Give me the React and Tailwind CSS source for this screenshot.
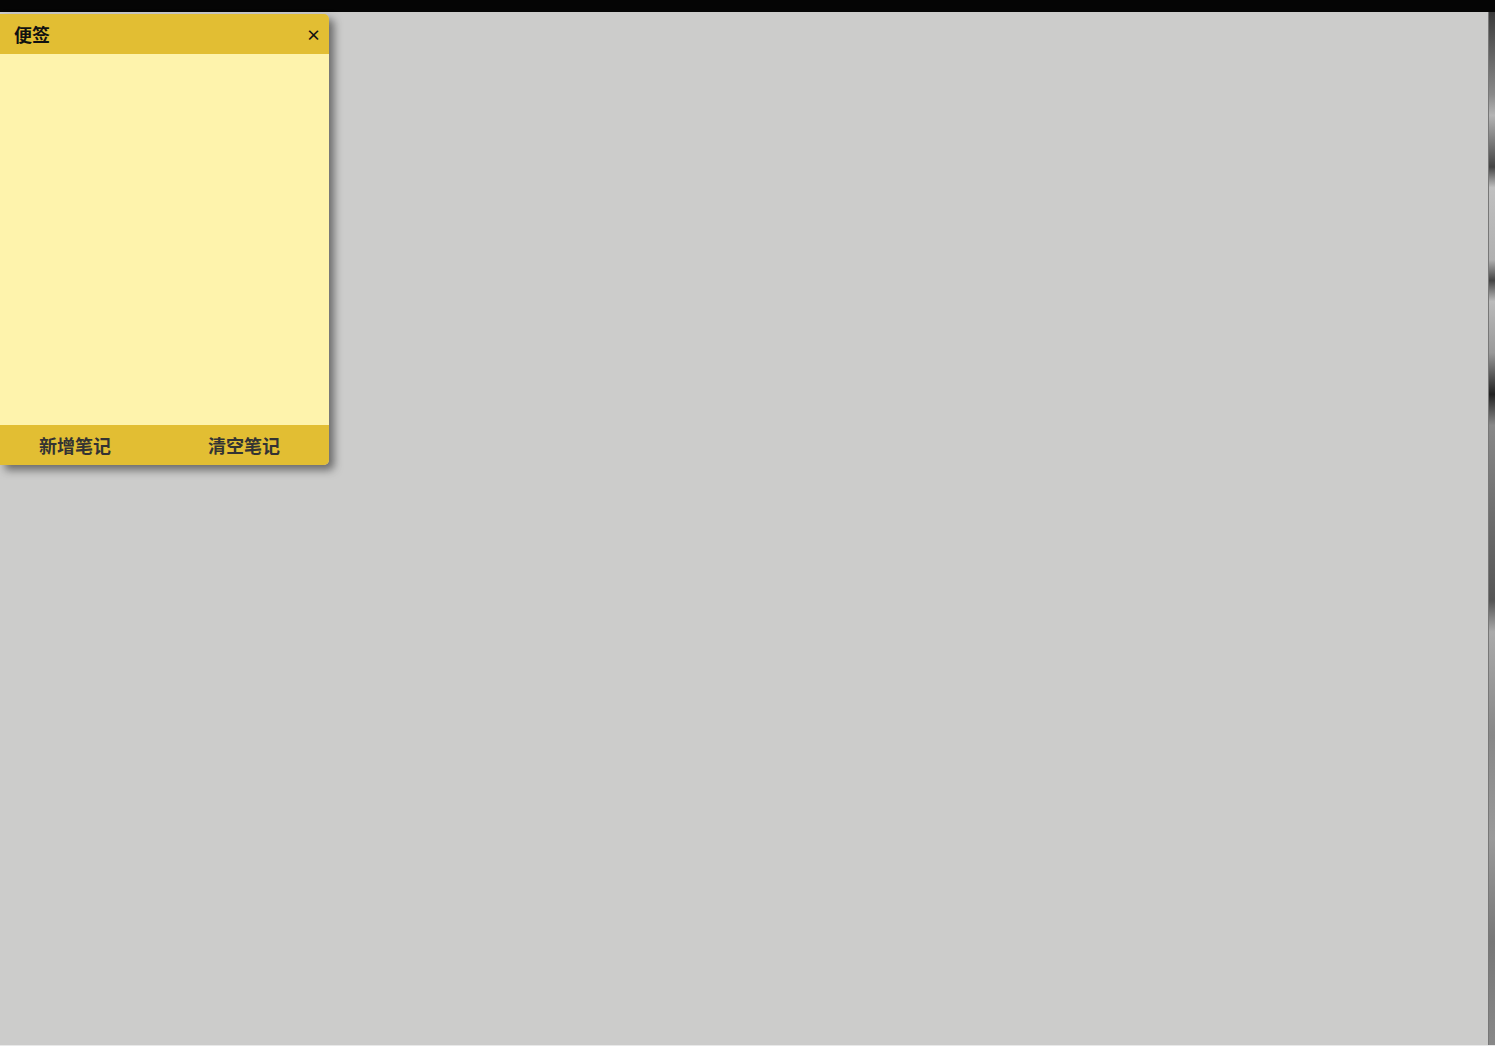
import React from 'react';

function StickyNote() {
    return (
        <div className="w-[329px] h-[451px] flex flex-col rounded-r-[5px] overflow-hidden shadow-[5px_5px_9px_rgba(40,40,40,0.6)]">
            <div className="h-[40px] shrink-0 bg-[#e2be33] flex items-center justify-between pl-[14px] pr-[8px]">
                <span className="text-[18px] font-bold text-[#111] leading-none">便签</span>
                <button className="text-[15px] font-bold text-[#111] leading-none">×</button>
            </div>
            <div className="flex-1 bg-[#fef3ac]"></div>
            <div className="h-[40px] shrink-0 bg-[#e2be33] flex items-center pl-[39px] gap-[97px]">
                <button className="text-[18px] font-bold text-[#333] leading-none">新增笔记</button>
                <button className="text-[18px] font-bold text-[#333] leading-none">清空笔记</button>
            </div>
        </div>
    );
}

export default function App() {
    return (
        <div className="h-[1046px] w-full flex flex-col bg-[#e6e6e6] overflow-hidden" style={{ fontFamily: '"Noto Sans CJK SC", "Noto Sans", sans-serif' }}>
            <div className="h-[12px] shrink-0 bg-[#050505]"></div>
            <div className="flex-1 flex">
                <div className="flex-1 bg-[#cccccb] pt-[2px]">
                    <StickyNote />
                </div>
                <div className="w-[7px] shrink-0 border-l border-[#777] bg-[linear-gradient(180deg,#3a3a3a_0%,#8a8a8a_8%,#b5b5b5_10%,#444_15%,#c0c0c0_17%,#b0b0b0_24%,#444_26%,#bbb_28%,#999_33%,#222_37%,#888_40%,#555_57%,#aaa_60%,#888_70%,#9a9a9a_80%,#777_90%,#888_100%)]"></div>
            </div>
            <div className="h-[1px] shrink-0 bg-[#e9e9e9]"></div>
        </div>
    );
}
